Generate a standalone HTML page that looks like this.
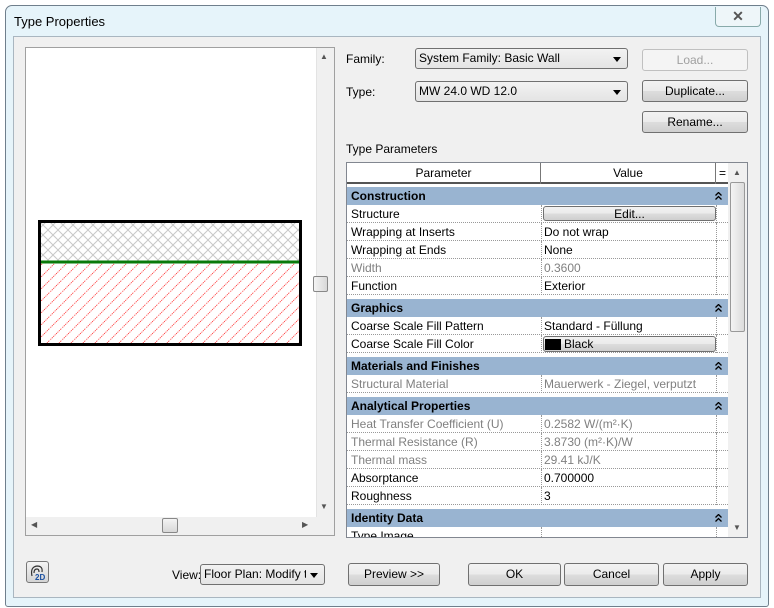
<!DOCTYPE html>
<html><head><meta charset="utf-8"><style>
*{box-sizing:border-box;margin:0;padding:0}
body{width:774px;height:608px;background:#fff;font-family:"Liberation Sans",sans-serif;font-size:12px;color:#000;position:relative;overflow:hidden}
.a{position:absolute}
.win{left:5px;top:5px;width:764px;height:602px;background:#e6f4fa;border:1px solid #6f7f8c;border-radius:7px 7px 3px 3px}
.client{left:13px;top:36px;width:748px;height:562px;background:#f0f0f0;border:1px solid #a9b6c0}
.btn{position:absolute;border:1px solid #707070;border-radius:3px;background:linear-gradient(#f2f2f2 0,#ebebeb 50%,#dddddd 51%,#cfcfcf 100%);text-align:center;line-height:20px}
.dd{position:absolute;border:1px solid #707070;border-radius:3px;background:linear-gradient(#f2f2f2,#e4e4e4);padding-left:3px;line-height:19px}
.dd:after{content:"";position:absolute;right:6px;top:8px;border-left:4px solid transparent;border-right:4px solid transparent;border-top:5px solid #000}
.grid{left:346px;top:162px;width:402px;height:376px;border:1px solid #828790;background:#fff;overflow:hidden}
.row{position:absolute;left:0;width:381px;height:18px;line-height:18px;border-bottom:1px dotted #999}
.row .p{position:absolute;left:4px}
.row .v{position:absolute;left:194px;top:0;height:18px;width:176px;border-left:1px dotted #999;padding-left:2px}
.row .e{position:absolute;left:369px;top:0;height:18px;border-left:1px dotted #999;width:12px}
.g{position:absolute;left:0;width:381px;height:18px;line-height:18px;background:#99b4d1;font-weight:bold;padding-left:4px}
.g svg{position:absolute;right:6px;top:5px}
.gr{color:#808080}
</style></head><body>
<div class="a win"></div>
<div class="a" style="left:14px;top:14px;font-size:13px">Type Properties</div>
<div class="a" style="left:715px;top:7px;width:46px;height:20px;border:1px solid #8aa;border-top:none;border-radius:0 0 4px 4px;background:#eef6f9;text-align:center;color:#555;font-size:14px;font-weight:bold;line-height:18px">✕</div>
<div class="a client"></div>

<div class="a" style="left:25px;top:47px;width:310px;height:489px;border:1px solid #a0a0a0;background:#f0f0f0"></div>
<div class="a" style="left:26px;top:48px;width:290px;height:469px;background:#fff"></div>
<div class="a" style="left:316px;top:48px;width:18px;height:469px;background:#f0f0f0;border-left:1px solid #e3e3e3"></div>
<div class="a" style="left:320px;top:52px;font-size:8px;color:#555">▲</div>
<div class="a" style="left:320px;top:502px;font-size:8px;color:#555">▼</div>
<div class="a" style="left:313px;top:276px;width:15px;height:16px;border:1px solid #888;border-radius:2px;background:linear-gradient(90deg,#f4f4f4,#d8d8d8)"></div>
<div class="a" style="left:26px;top:517px;width:290px;height:18px;background:#f0f0f0"></div>
<div class="a" style="left:31px;top:520px;font-size:8px;color:#555">◀</div>
<div class="a" style="left:302px;top:520px;font-size:8px;color:#555">▶</div>
<div class="a" style="left:162px;top:518px;width:16px;height:15px;border:1px solid #888;border-radius:2px;background:linear-gradient(#f4f4f4,#d8d8d8)"></div>

<svg class="a" style="left:38px;top:220px" width="264" height="126">
<defs>
<pattern id="x" width="10" height="10" patternUnits="userSpaceOnUse"><path d="M0 0L10 10M10 0L0 10" stroke="#c8c8c8" stroke-width="1" fill="none"/></pattern>
<pattern id="h" width="12" height="12" patternUnits="userSpaceOnUse"><path d="M-1 13L13 -1M-1 1L1 -1M11 13L13 11" stroke="#ff3030" stroke-width="0.8" stroke-dasharray="1.2 0.8" fill="none"/></pattern>
</defs>
<rect x="1.5" y="1.5" width="261" height="41" fill="url(#x)"/>
<rect x="1.5" y="43" width="261" height="81" fill="url(#h)"/>
<rect x="1.5" y="1.5" width="261" height="123" fill="none" stroke="#000" stroke-width="3"/>
<line x1="3" y1="42" x2="261" y2="42" stroke="#0a7a0a" stroke-width="3"/>
</svg>

<div class="a" style="left:346px;top:52px">Family:</div>
<div class="dd" style="left:415px;top:48px;width:213px;height:21px">System Family: Basic Wall</div>
<div class="btn" style="left:642px;top:49px;width:106px;height:22px;color:#a0a0a0;background:#f4f4f4;border-color:#c0c0c0">Load...</div>
<div class="a" style="left:346px;top:85px">Type:</div>
<div class="dd" style="left:415px;top:81px;width:213px;height:21px">MW 24.0 WD 12.0</div>
<div class="btn" style="left:642px;top:80px;width:106px;height:22px">Duplicate...</div>
<div class="btn" style="left:642px;top:111px;width:106px;height:22px">Rename...</div>
<div class="a" style="left:346px;top:142px">Type Parameters</div>

<div class="a grid">
 <div class="a" style="left:0;top:0;width:381px;height:21px;border-bottom:2px solid #555;background:#fff"></div>
 <div class="a" style="left:0;top:0;width:194px;height:21px;line-height:20px;text-align:center;border-right:1px solid #777">Parameter</div>
 <div class="a" style="left:194px;top:0;width:175px;height:21px;line-height:20px;text-align:center;border-right:1px solid #777">Value</div>
 <div class="a" style="left:370px;top:0;width:11px;line-height:20px;text-align:center">=</div>
 <div class="a" style="left:381px;top:0;width:19px;height:376px;background:#f0f0f0"></div>
 <div class="a" style="left:386px;top:5px;font-size:8px;color:#555">▲</div>
 <div class="a" style="left:386px;top:360px;font-size:8px;color:#555">▼</div>
 <div class="a" style="left:383px;top:19px;width:15px;height:150px;border:1px solid #999;border-radius:2px;background:linear-gradient(90deg,#f4f4f4,#dcdcdc)"></div>

 <div class="g" style="top:24px">Construction<svg width="7" height="8"><path d="M0.5 3.5L3.5 0.5L6.5 3.5M0.5 7.5L3.5 4.5L6.5 7.5" stroke="#000" stroke-width="1.3" fill="none"/></svg></div>
 <div class="row" style="top:42px"><span class="p">Structure</span><span class="v"><span class="btn" style="left:1px;top:1px;width:173px;height:15px;line-height:14px">Edit...</span></span><span class="e"></span></div>
 <div class="row" style="top:60px"><span class="p">Wrapping at Inserts</span><span class="v">Do not wrap</span><span class="e"></span></div>
 <div class="row" style="top:78px"><span class="p">Wrapping at Ends</span><span class="v">None</span><span class="e"></span></div>
 <div class="row gr" style="top:96px"><span class="p">Width</span><span class="v">0.3600</span><span class="e"></span></div>
 <div class="row" style="top:114px"><span class="p">Function</span><span class="v">Exterior</span><span class="e"></span></div>
 <div class="g" style="top:136px">Graphics<svg width="7" height="8"><path d="M0.5 3.5L3.5 0.5L6.5 3.5M0.5 7.5L3.5 4.5L6.5 7.5" stroke="#000" stroke-width="1.3" fill="none"/></svg></div>
 <div class="row" style="top:154px"><span class="p">Coarse Scale Fill Pattern</span><span class="v">Standard - Füllung</span><span class="e"></span></div>
 <div class="row" style="top:172px"><span class="p">Coarse Scale Fill Color</span><span class="v"><span class="btn" style="left:1px;top:1px;width:173px;height:16px;line-height:15px;text-align:left;padding-left:20px">Black</span><span class="a" style="left:3px;top:4px;width:16px;height:11px;background:#000"></span></span><span class="e"></span></div>
 <div class="g" style="top:194px">Materials and Finishes<svg width="7" height="8"><path d="M0.5 3.5L3.5 0.5L6.5 3.5M0.5 7.5L3.5 4.5L6.5 7.5" stroke="#000" stroke-width="1.3" fill="none"/></svg></div>
 <div class="row gr" style="top:212px"><span class="p">Structural Material</span><span class="v">Mauerwerk - Ziegel, verputzt</span><span class="e"></span></div>
 <div class="g" style="top:234px">Analytical Properties<svg width="7" height="8"><path d="M0.5 3.5L3.5 0.5L6.5 3.5M0.5 7.5L3.5 4.5L6.5 7.5" stroke="#000" stroke-width="1.3" fill="none"/></svg></div>
 <div class="row gr" style="top:252px"><span class="p">Heat Transfer Coefficient (U)</span><span class="v">0.2582 W/(m²·K)</span><span class="e"></span></div>
 <div class="row gr" style="top:270px"><span class="p">Thermal Resistance (R)</span><span class="v">3.8730 (m²·K)/W</span><span class="e"></span></div>
 <div class="row gr" style="top:288px"><span class="p">Thermal mass</span><span class="v">29.41 kJ/K</span><span class="e"></span></div>
 <div class="row" style="top:306px"><span class="p">Absorptance</span><span class="v">0.700000</span><span class="e"></span></div>
 <div class="row" style="top:324px"><span class="p">Roughness</span><span class="v">3</span><span class="e"></span></div>
 <div class="g" style="top:346px">Identity Data<svg width="7" height="8"><path d="M0.5 3.5L3.5 0.5L6.5 3.5M0.5 7.5L3.5 4.5L6.5 7.5" stroke="#000" stroke-width="1.3" fill="none"/></svg></div>
 <div class="row" style="top:364px"><span class="p">Type Image</span><span class="v"></span><span class="e"></span></div>
</div>

<div class="a" style="left:26px;top:561px;width:23px;height:22px;border:1px solid #777;border-radius:3px;background:linear-gradient(#f4f4f4,#d4d4d4)">
<svg width="21" height="20"><path d="M5 14 Q3 5 10 4 Q16 4 15 10 M7 11 Q7 7 10 7 Q12 7 12 10" stroke="#333" fill="none" stroke-width="1.2"/><text x="8" y="18" font-size="8" fill="#1a4fa0" font-family="Liberation Sans" font-weight="bold">2D</text></svg></div>
<div class="a" style="left:172px;top:568px">View:</div>
<div class="dd" style="left:200px;top:564px;width:125px;height:21px;overflow:hidden;white-space:nowrap;padding-right:18px"><span style="display:block;width:102px;overflow:hidden">Floor Plan: Modify type</span></div>
<div class="btn" style="left:348px;top:563px;width:92px;height:23px">Preview &gt;&gt;</div>
<div class="btn" style="left:468px;top:563px;width:93px;height:23px">OK</div>
<div class="btn" style="left:564px;top:563px;width:95px;height:23px">Cancel</div>
<div class="btn" style="left:663px;top:563px;width:85px;height:23px">Apply</div>
</body></html>
